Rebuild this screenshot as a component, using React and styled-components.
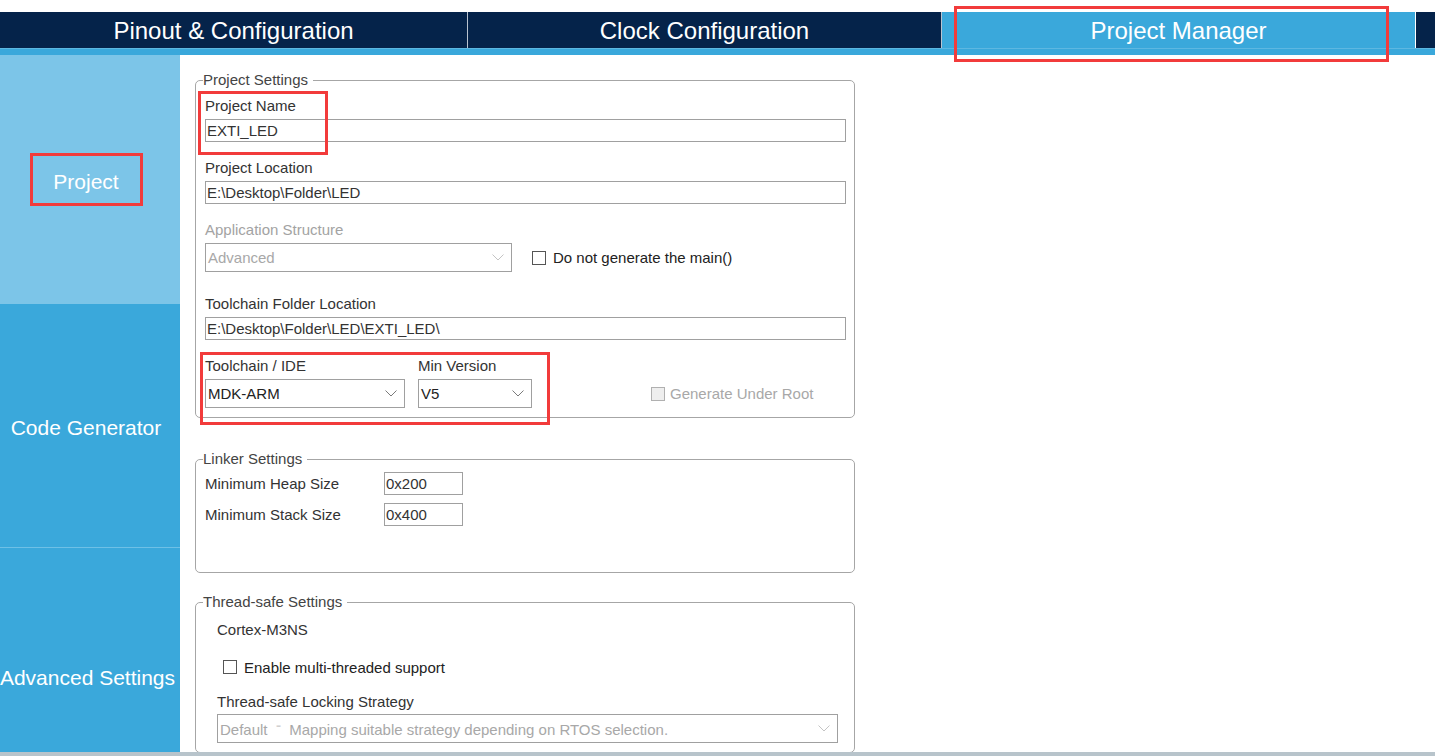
import React from "react";
import styled, { createGlobalStyle } from "styled-components";

const GlobalStyle = createGlobalStyle`
  body {
    margin: 0;
    font-family: "Liberation Sans", Arial, sans-serif;
    background: #ffffff;
  }
`;

const Chevron = ({ color = "#7a7a7a" }) => (
  <svg width="12" height="7" viewBox="0 0 12 7">
    <polyline points="0.5,0.5 6,6 11.5,0.5" fill="none" stroke={color} strokeWidth="1" />
  </svg>
);

const App = () => {
  return (
    <Page>
      <GlobalStyle />
      <TopGap />
      <TabBar>
        <Tab width={468}>Pinout &amp; Configuration</Tab>
        <Tab width={474}>Clock Configuration</Tab>
        <Tab width={474} active>Project Manager</Tab>
      </TabBar>
      <Strip />
      <Body>
        <Sidebar>
          <SideItem height={249} active>Project</SideItem>
          <SideItem height={244} divider>Code Generator</SideItem>
          <SideItem height={256} shift={5}>Advanced Settings</SideItem>
        </Sidebar>
        <Main>
          <Group padBottom={9}>
            <Legend>Project Settings</Legend>
            <Label top={8}>Project Name</Label>
            <TextInput top={4}>EXTI_LED</TextInput>
            <Label top={17}>Project Location</Label>
            <TextInput top={4}>E:\Desktop\Folder\LED</TextInput>
            <Label top={17} disabled>Application Structure</Label>
            <Row top={4}>
              <Dropdown width={307} disabled>
                <span>Advanced</span>
                <Chevron color="#c4c4c4" />
              </Dropdown>
              <CheckLine gap={20}>
                <Box />
                <span>Do not generate the main()</span>
              </CheckLine>
            </Row>
            <Label top={23}>Toolchain Folder Location</Label>
            <TextInput top={4}>E:\Desktop\Folder\LED\EXTI_LED\</TextInput>
            <Row top={17} bottom>
              <Column width={200}>
                <Label>Toolchain / IDE</Label>
                <Dropdown width={200} top={4}>
                  <span>MDK-ARM</span>
                  <Chevron />
                </Dropdown>
              </Column>
              <Column width={114} gap={13}>
                <Label>Min Version</Label>
                <Dropdown width={114} top={4}>
                  <span>V5</span>
                  <Chevron />
                </Dropdown>
              </Column>
              <CheckLine gap={119} disabled height={29} spacing={5}>
                <Box disabled />
                <span>Generate Under Root</span>
              </CheckLine>
            </Row>
          </Group>

          <Group top={32} padBottom={46}>
            <Legend>Linker Settings</Legend>
            <SizeRow top={4}>
              <SizeLabel>Minimum Heap Size</SizeLabel>
              <SmallInput>0x200</SmallInput>
            </SizeRow>
            <SizeRow top={8}>
              <SizeLabel>Minimum Stack Size</SizeLabel>
              <SmallInput>0x400</SmallInput>
            </SizeRow>
          </Group>

          <Group top={20} padBottom={9}>
            <Legend>Thread-safe Settings</Legend>
            <Indented>
              <Label top={10}>Cortex-M3NS</Label>
              <CheckLine top={19} indent={8}>
                <Box />
                <span>Enable multi-threaded support</span>
              </CheckLine>
              <Label top={17}>Thread-safe Locking Strategy</Label>
              <Dropdown width={621} top={3} left={2} disabled>
                <span>Default &nbsp;⁻&nbsp; Mapping suitable strategy depending on RTOS selection.</span>
                <Chevron color="#c4c4c4" />
              </Dropdown>
            </Indented>
          </Group>
        </Main>
      </Body>
      <BottomBar />

      <Marker style={{ left: 954, top: 6, width: 435, height: 56 }} />
      <Marker style={{ left: 30, top: 153, width: 113, height: 53 }} />
      <Marker style={{ left: 198, top: 91, width: 130, height: 64 }} />
      <Marker style={{ left: 200, top: 352, width: 350, height: 73 }} />
    </Page>
  );
};

const Page = styled.div`
  position: relative;
  width: 1435px;
  height: 756px;
  overflow: hidden;
  display: flex;
  flex-direction: column;
`;

const TopGap = styled.div`
  height: 12px;
  background: #ffffff;
`;

const TabBar = styled.div`
  display: flex;
  height: 36px;
  background: #05234a;
`;

const Tab = styled.div`
  width: ${(p) => p.width}px;
  box-sizing: border-box;
  display: flex;
  align-items: center;
  justify-content: center;
  padding-top: 2px;
  color: #ffffff;
  font-size: 24px;
  background: ${(p) => (p.active ? "#3aa8db" : "#05234a")};
  border-right: 1px solid ${(p) => (p.active ? "#ffffff" : "#b9c3cf")};
`;

const Strip = styled.div`
  height: 7px;
  background: #3aa8db;
  border-top: 1px solid #5db7e1;
  box-sizing: border-box;
`;

const Body = styled.div`
  flex: 1;
  display: flex;
  overflow: hidden;
`;

const Sidebar = styled.div`
  width: 180px;
  display: flex;
  flex-direction: column;
  background: #3aa8db;
`;

const SideItem = styled.div`
  flex: none;
  box-sizing: border-box;
  height: ${(p) => p.height}px;
  display: flex;
  align-items: center;
  justify-content: center;
  padding: 4px ${(p) => (p.shift != null ? p.shift : 8)}px 0 0;
  color: #ffffff;
  font-size: 21px;
  white-space: nowrap;
  background: ${(p) => (p.active ? "#7cc5e8" : "#3aa8db")};
  border-bottom: ${(p) => (p.divider ? "1px solid #6ec0e6" : "none")};
`;

const Main = styled.div`
  flex: 1;
  padding: 16px 0 0 15px;
  background: #ffffff;
`;

const Group = styled.fieldset`
  width: 660px;
  box-sizing: border-box;
  margin: ${(p) => p.top || 0}px 0 0 0;
  padding: 0 8px ${(p) => (p.padBottom != null ? p.padBottom : 8)}px 7px;
  border: 1px solid #a6a6a6;
  border-radius: 5px;
  min-width: 0;
`;

const Legend = styled.legend`
  padding: 0 5px 0 0;
  font-size: 15px;
  line-height: 18px;
  color: #444444;
`;

const Label = styled.div`
  margin: ${(p) => p.top || 0}px 0 0 2px;
  font-size: 15px;
  line-height: 18px;
  color: ${(p) => (p.disabled ? "#a3a3a3" : "#333333")};
  white-space: nowrap;
`;

const TextInput = styled.div`
  margin: ${(p) => p.top || 0}px 0 0 2px;
  width: 641px;
  height: 23px;
  box-sizing: border-box;
  border: 1px solid #a0a0a0;
  padding-left: 1px;
  font-size: 15px;
  line-height: 21px;
  color: #333333;
`;

const Row = styled.div`
  display: flex;
  align-items: ${(p) => (p.bottom ? "flex-end" : "center")};
  margin: ${(p) => p.top || 0}px 0 0 2px;
`;

const Column = styled.div`
  width: ${(p) => p.width}px;
  margin-left: ${(p) => p.gap || 0}px;
  display: flex;
  flex-direction: column;
  & > div:first-child {
    margin-left: 0;
  }
`;

const Dropdown = styled.div`
  width: ${(p) => p.width}px;
  height: 29px;
  margin-top: ${(p) => p.top || 0}px;
  margin-left: ${(p) => p.left || 0}px;
  box-sizing: border-box;
  border: 1px solid #a0a0a0;
  display: flex;
  align-items: center;
  justify-content: space-between;
  padding: 0 7px 0 2px;
  font-size: 15px;
  color: ${(p) => (p.disabled ? "#a8a8a8" : "#222222")};
  background: #ffffff;
  white-space: nowrap;
`;

const CheckLine = styled.div`
  display: flex;
  align-items: center;
  gap: ${(p) => p.spacing || 7}px;
  height: ${(p) => p.height || 18}px;
  margin-left: ${(p) => p.gap || p.indent || 0}px;
  margin-top: ${(p) => p.top || 0}px;
  font-size: 15px;
  color: ${(p) => (p.disabled ? "#a8a8a8" : "#222222")};
  white-space: nowrap;
`;

const Box = styled.span`
  width: 14px;
  height: 14px;
  box-sizing: border-box;
  border: 1px solid ${(p) => (p.disabled ? "#b0b0b0" : "#555555")};
  background: ${(p) => (p.disabled ? "#eeeeee" : "#ffffff")};
  flex: none;
`;

const SizeRow = styled.div`
  display: flex;
  align-items: center;
  margin: ${(p) => p.top || 0}px 0 0 2px;
`;

const SizeLabel = styled.div`
  width: 179px;
  font-size: 15px;
  color: #333333;
`;

const SmallInput = styled.div`
  width: 79px;
  height: 23px;
  box-sizing: border-box;
  border: 1px solid #a0a0a0;
  padding-left: 1px;
  font-size: 15px;
  line-height: 21px;
  color: #333333;
`;

const Indented = styled.div`
  padding-left: 12px;
`;

const BottomBar = styled.div`
  height: 4px;
  background: #b8c4cb;
`;

const Marker = styled.div`
  position: absolute;
  box-sizing: border-box;
  border: 3px solid #f23b3b;
  pointer-events: none;
`;

export default App;
